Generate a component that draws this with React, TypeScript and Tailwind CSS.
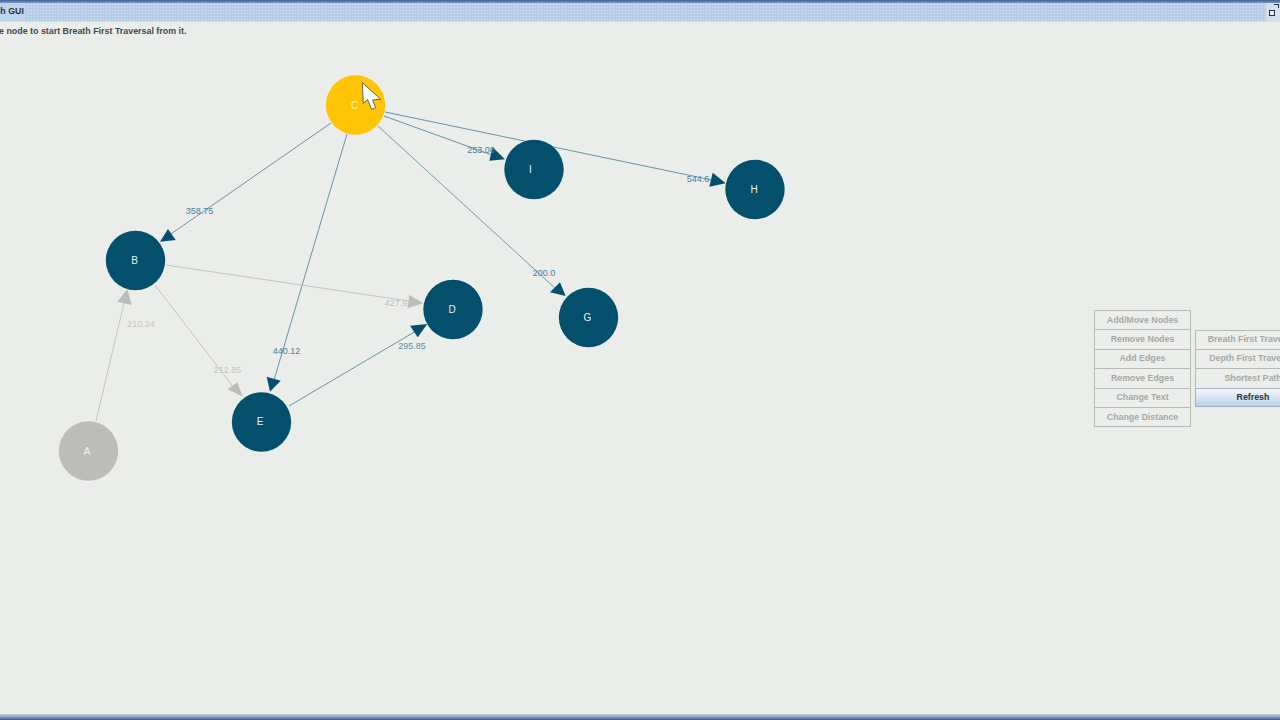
const dark = "#04506c";
const gray = "#bcbdbb";

type N = { id: string; x: number; y: number; tx: number; ty: number; fill: string; tc?: string };
const nodes: N[] = [
  { id: "C", x: 355.5, y: 105, tx: 354.5, ty: 105, fill: "#ffc504", tc: "#fff2c0" },
  { id: "I", x: 534, y: 169.5, tx: 530.5, ty: 169.5, fill: dark },
  { id: "H", x: 755, y: 189.5, tx: 754, ty: 189, fill: dark },
  { id: "B", x: 135.5, y: 260.5, tx: 134.5, ty: 260, fill: dark },
  { id: "D", x: 453, y: 309.5, tx: 452, ty: 309.5, fill: dark },
  { id: "G", x: 588.5, y: 317.5, tx: 587.5, ty: 317.5, fill: dark },
  { id: "E", x: 261.5, y: 422, tx: 260, ty: 421.5, fill: dark },
  { id: "A", x: 88.5, y: 451, tx: 87, ty: 451, fill: gray, tc: "#f0f0ee" },
];

type E = { x1: number; y1: number; x2: number; y2: number; c: string; head: string };
const edges: E[] = [
  { x1: 331, y1: 123, x2: 168, y2: 236, c: "#4f8399", head: "160,241.7 168,229 175.7,240" },
  { x1: 347, y1: 134, x2: 274, y2: 380, c: "#4f8399", head: "270,391.7 266.7,376.7 280.7,380.7" },
  { x1: 378, y1: 126, x2: 556, y2: 289, c: "#5f8ea2", head: "565.7,296 550,292.3 560,282.3" },
  { x1: 384, y1: 116, x2: 492, y2: 155, c: "#4f8399", head: "505,159.3 489.3,160.7 492.7,147.3" },
  { x1: 385, y1: 112, x2: 712, y2: 180, c: "#4f8399", head: "725.7,183.3 709.3,186.7 712.7,172.7" },
  { x1: 96, y1: 421, x2: 124, y2: 303, c: gray, head: "127.3,289.3 117.3,301.7 131.7,305" },
  { x1: 155, y1: 285, x2: 234, y2: 388, c: gray, head: "242.7,396.7 227.7,389.3 237.3,382.3" },
  { x1: 166, y1: 265, x2: 409, y2: 301, c: gray, head: "423.3,303.3 407.3,308.3 409.3,295" },
  { x1: 289, y1: 406, x2: 416, y2: 331, c: "#4f8399", head: "427.3,324 410,325.7 417.7,337.3" },
];

const labels = [
  { t: "358.75", x: 199.5, y: 211, c: "#47829a" },
  { t: "253.08", x: 481, y: 149.5, c: "#47829a" },
  { t: "544.6", x: 698, y: 178.5, c: "#47829a" },
  { t: "200.0", x: 544, y: 273, c: "#47829a" },
  { t: "427.9", x: 396, y: 302.5, c: "#bcbdbb" },
  { t: "440.12", x: 286.5, y: 350.5, c: "#47829a" },
  { t: "295.85", x: 412, y: 345.5, c: "#5f8ea2" },
  { t: "210.24", x: 141, y: 323.5, c: "#c4c5c3" },
  { t: "212.85", x: 227.5, y: 369.5, c: "#c4c5c3" },
];

const left = ["Add/Move Nodes", "Remove Nodes", "Add Edges", "Remove Edges", "Change Text", "Change Distance"];
const right = ["Breath First Traversal", "Depth First Traversal", "Shortest Path"];

function Btn({ label }: { label: string }) {
  return (
    <div className="h-[20.4px] flex items-center justify-center whitespace-nowrap border border-[#b8bab8] -mb-px bg-[#eceeec] text-[8.8px] font-bold text-[#a6a8a6]">
      {label}
    </div>
  );
}

export default function App() {
  return (
    <div className="w-[1280px] h-[720px] flex flex-col overflow-hidden bg-[#eaedea] font-['Liberation_Sans',Arial,sans-serif]">
      <div className="h-[3px] shrink-0 bg-gradient-to-b from-[#3f5f95] to-[#7d99c4]" />
      <div className="h-[18px] shrink-0 flex items-center bg-[#b5cde6] bg-[radial-gradient(#dbe7f3_0.8px,transparent_0.9px)] bg-[length:3px_3px]">
        <div className="w-[26px] h-full flex items-center overflow-hidden bg-[#bdd3e9] shrink-0">
          <span className="text-[8.8px] font-bold text-[#2c3442] whitespace-nowrap ml-[-5px]">ph GUI</span>
        </div>
        <div className="flex-1" />
        <div className="w-[14px] h-full relative bg-[#d3e0ed] shrink-0">
          <div className="absolute left-[3px] top-[7px] w-[6px] h-[6px] border-[1.5px] border-[#26324a] bg-[#e8eef4]" />
          <div className="absolute left-[8px] top-[1px] w-[5px] h-[4px] border-t border-r border-[#26324a]" />
        </div>
      </div>
      <div className="h-px shrink-0 bg-[#d3dce0]" />
      <div className="h-[19px] shrink-0 flex items-center overflow-hidden">
        <span className="text-[8.9px] font-bold text-[#45494b] whitespace-nowrap ml-[-1px]">e node to start Breath First Traversal from it.</span>
      </div>
      <div className="flex-1 flex min-h-0">
        <div className="w-[1094px] shrink-0 relative">
          <svg width="1094" height="673" viewBox="0 41 1094 673" className="block">
            {edges.map((e, i) => (
              <g key={i}>
                <line x1={e.x1} y1={e.y1} x2={e.x2} y2={e.y2} stroke={e.c} strokeWidth="0.85" />
                <polygon points={e.head} fill={e.c === gray ? gray : dark} />
              </g>
            ))}
            {labels.map((l) => (
              <text key={l.t} x={l.x} y={l.y} textAnchor="middle" dominantBaseline="central" fontSize="9" fill={l.c}>
                {l.t}
              </text>
            ))}
            {nodes.map((n) => (
              <g key={n.id}>
                <circle cx={n.x} cy={n.y} r="29.7" fill={n.fill} />
                <text x={n.tx} y={n.ty} textAnchor="middle" dominantBaseline="central" fontSize="10" fill={n.tc ?? "#e6f2f6"}>
                  {n.id}
                </text>
              </g>
            ))}
            <path d="M362.3 82.7 L363.3 103.5 L367.5 99.5 L371.7 109.5 L375.7 107.5 L372.5 100 L380.7 99.3 Z" fill="#fff" stroke="#5a5a3a" strokeWidth="0.9" />
          </svg>
        </div>
        <div className="flex-1 min-w-0 overflow-hidden flex gap-[4px] pt-[269px] items-start">
          <div className="w-[97px] shrink-0 flex flex-col">
            {left.map((l) => (
              <Btn key={l} label={l} />
            ))}
          </div>
          <div className="w-[116px] shrink-0 flex flex-col mt-[19.5px]">
            {right.map((l) => (
              <Btn key={l} label={l} />
            ))}
            <div className="h-[19.5px] flex items-center justify-center border border-[#9fb0c4] bg-gradient-to-b from-[#f4f7fa] to-[#bcd2e8] text-[8.8px] font-bold text-[#2b3240]">
              Refresh
            </div>
          </div>
        </div>
      </div>
      <div className="h-[6px] shrink-0 bg-gradient-to-b from-[#c0c9dc] via-[#8d9ec4] to-[#2f5488]" />
    </div>
  );
}
